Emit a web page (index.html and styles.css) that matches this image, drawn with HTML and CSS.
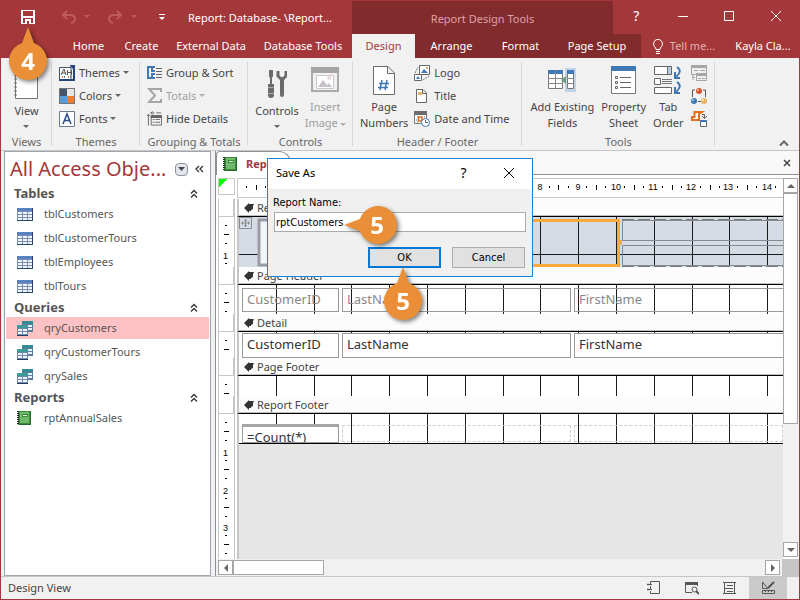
FILE: index.html
```html
<!DOCTYPE html>
<html lang="en">

<head>
    <meta charset="UTF-8">
    <meta name="viewport" content="width=device-width, initial-scale=1.0">
    <title>Report Design Tools</title>
    <link rel="stylesheet" href="styles.css">
</head>

<body>

    <!-- shared drawings -->
    <svg class="defs" aria-hidden="true">
        <symbol id="grid" viewBox="0 0 544 52">
            <path d="M37.5 0V52M75.5 0V52M112.5 0V52M150.5 0V52M188.5 0V52M226.5 0V52M264.5 0V52M301.5 0V52M339.5 0V52M377.5 0V52M415.5 0V52M453.5 0V52M490.5 0V52M528.5 0V52" stroke="#1c1c1c" />
        </symbol>
        <symbol id="ticks" viewBox="0 0 14 146">
            <path d="M6 8.500h2M5 17.500h5M6 26.500h2M6 46.500h2M5 55.500h5M6 64.500h2M6 84.500h2M5 93.500h5M6 102.500h2M6 121.500h2M5 130.500h5M6 139.500h2" stroke="#000" />
        </symbol>
        <symbol id="arrow" viewBox="0 0 10 10">
            <path d="M0 5L5 0V1H10L9 3V6L7 7V8H5V10Z" fill="#333" />
        </symbol>
        <symbol id="table" viewBox="0 0 16 13">
            <path d="M0 0H16V13H0Z" fill="#7c8fb0" />
            <path d="M0 0H16V3H0Z" fill="#5b82c0" />
            <path d="M1 4H5V6H1ZM6 4H10V6H6ZM11 4H15V6H11ZM1 7H5V9H1ZM6 7H10V9H6ZM11 7H15V9H11ZM1 10H5V12H1ZM6 10H10V12H6ZM11 10H15V12H11Z" fill="#eef4fb" />
            <path d="M0 12.500H15.500V0" stroke="#2b426c" fill="none" />
        </symbol>
        <symbol id="query" viewBox="0 0 16 15">
            <path d="M5 0H16V11H5Z" fill="#5b7ba0" />
            <path d="M5 0H16V3H5Z" fill="#2f8a91" />
            <path d="M6 4H10V10H6ZM11 4H15V6H11ZM11 7H15V9H11Z" fill="#edf3fa" />
            <path d="M0 4H11V15H0Z" fill="#6d88b0" />
            <path d="M0 4H11V7H0Z" fill="#3d9b9b" />
            <path d="M1 8H5V10H1ZM6 8H10V10H6ZM1 11H5V13H1ZM6 11H10V13H6Z" fill="#f2f7fc" />
            <path d="M0 14.500H11" stroke="#253d67" />
        </symbol>
        <symbol id="book" viewBox="0 0 14 14">
            <path d="M1 0H14V14H1Z" fill="#3c8a3e" />
            <path d="M3 1H12V12H3Z" fill="#6fb86c" />
            <path d="M5 3H11V6H5Z" fill="#3c8a3e" />
            <path d="M6 4H10V5H6Z" fill="#d9efd2" />
            <path d="M1 0V14" stroke="#222" stroke-width="2" stroke-dasharray="1 1" />
            <path d="M13.500 0V13.500H3" stroke="#286b2e" fill="none" />
        </symbol>
        <symbol id="chev" viewBox="0 0 8 8">
            <path d="M1 4L4 1L7 4M1 8L4 5L7 8" stroke="#333" stroke-width="1.300" fill="none" />
        </symbol>
    </svg>

    <div class="window">
        <header class="titlebar">
            <div class="quick">
                <button class="bare" aria-label="Save"><svg width="14" height="14" viewBox="0 0 14 14"><path d="M0 0H14V14H0Z" fill="#fff" /><path d="M2 1H12V6H2ZM2 8H12V13H2Z" fill="#a4373a" /><path d="M4 9H10V13H4Z" fill="#fff" /><path d="M6 11H8V14H6Z" fill="#a4373a" /></svg></button>
                <button class="bare undo" aria-label="Undo"><svg width="29" height="14" viewBox="0 0 29 14"><path d="M6 1L2 5L6 9M2 5H9Q14 5 14 9Q14 12 10 13" stroke="#c05b5d" stroke-width="2" fill="none" /><path d="M23 5H29L26 8Z" fill="#c05b5d" /></svg></button>
                <button class="bare redo" aria-label="Redo"><svg width="29" height="14" viewBox="0 0 29 14"><path d="M9 1L13 5L9 9M13 5H6Q1 5 1 9Q1 12 5 13" stroke="#c05b5d" stroke-width="2" fill="none" /><path d="M23 5H29L26 8Z" fill="#c05b5d" /></svg></button>
                <button class="bare more" aria-label="Customize toolbar"><svg width="6" height="6" viewBox="0 0 6 6"><path d="M0 .5H6" stroke="#fff" /><path d="M0 3H6L3 6Z" fill="#fff" /></svg></button>
            </div>
            <div class="file-name">Report: Database- \Report...</div>
            <div class="context-title">Report Design Tools</div>
            <div class="window-buttons">
                <button class="bare" aria-label="Help">?</button>
                <button class="bare" aria-label="Minimize"><svg width="10" height="10"><path d="M0 5.500H10" stroke="#fff" /></svg></button>
                <button class="bare" aria-label="Maximize"><svg width="10" height="10"><path d="M.5 .5H9.500V9.500H.5Z" stroke="#fff" fill="none" /></svg></button>
                <button class="bare" aria-label="Close"><svg width="10" height="10"><path d="M0 0L10 10M10 0L0 10" stroke="#fff" /></svg></button>
            </div>
        </header>

        <nav class="tabs">
            <span></span>
            <button>Home</button>
            <button>Create</button>
            <button>External Data</button>
            <button>Database Tools</button>
            <button class="active">Design</button>
            <button class="context">Arrange</button>
            <button class="context">Format</button>
            <button class="context">Page Setup</button>
            <button class="tell"><svg width="10" height="15" viewBox="0 0 10 15"><path d="M3 10.500Q3 9 1.500 7.500Q.5 6 .5 5Q1 .5 5 .5T9.500 5Q9.500 6 8.500 7.500Q7 9 7 10.500ZM3 12.500H7M3 14.500H7" stroke="#fff" fill="none" /></svg>Tell me...</button>
            <button>Kayla Cla...</button>
        </nav>

        <section class="ribbon">
            <div class="group views">
                <div class="tools">
                    <button class="big"><span class="icon"><svg width="24" height="30" viewBox="0 0 24 30"><path d="M1.500 1.500H23.500V29.500H1.500Z" fill="#fff" stroke="#777" /><path d="M0 6h3M0 10h3M0 14h3M0 18h3M0 22h3M0 26h3" stroke="#777" /></svg></span>View<span class="drop"></span></button>
                </div>
                <h2>Views</h2>
            </div>
            <div class="group themes">
                <div class="tools column">
                    <button class="small"><svg width="16" height="16" viewBox="0 0 16 16"><path d="M.5 2.500H12V15.500H.5Z" fill="#fff" stroke="#44546a" /><path d="M11 0H16V16H0V14H14V4L11 1Z" fill="#26437c" /><path d="M2 10L5 4L7 10M3 8H7M8.500 5V10M12.500 5V10M8 7.500H12" stroke="#555" fill="none" /><path d="M3 12h1M9 12h1" stroke="#ed7d31" stroke-width="2" /><path d="M5 12h1M11 12h1" stroke="#4a7ebb" stroke-width="2" /></svg>Themes<i class="drop"></i></button>
                    <button class="small"><svg width="16" height="16" viewBox="0 0 16 16"><path d="M0 0H16V16H0Z" fill="#767676" /><path d="M1 1H8V8H1Z" fill="#44546a" /><path d="M8 1H15V8H8Z" fill="#e7e6e6" /><path d="M1 8H8V15H1Z" fill="#5b9bd5" /><path d="M8 8H15V15H8Z" fill="#ed7d31" /></svg>Colors<i class="drop"></i></button>
                    <button class="small"><svg width="16" height="16" viewBox="0 0 16 16"><path d="M.5 .5H15.500V15.500H.5Z" fill="#fff" stroke="#6b7a90" /><path d="M4 13L8 3L12 13M5.500 9.500H10.500" stroke="#234b84" stroke-width="1.500" fill="none" /></svg>Fonts<i class="drop"></i></button>
                </div>
                <h2>Themes</h2>
            </div>
            <div class="group grouping">
                <div class="tools column">
                    <button class="small"><svg width="15" height="14" viewBox="0 0 15 14"><path d="M4 1H1V12H4M8 1H5V5H8M8 8H5V12H8" stroke="#3f7ab5" stroke-width="2" fill="none" /><path d="M9 2.500H15M9 5.500H15M9 8.500H15M9 11.500H15" stroke="#666" /></svg>Group &amp; Sort</button>
                    <button class="small off"><svg width="15" height="15" viewBox="0 0 15 15"><path d="M14 4V1H2L8 7.500L2 14H14V11" stroke="#a6a6a6" stroke-width="2" fill="none" /></svg>Totals<i class="drop"></i></button>
                    <button class="small"><svg width="15" height="15" viewBox="0 0 16 15"><path d="M4 1.500H8M10 1.500H15M6 0L4 1.500L6 3M1.500 3V15M0 5L1.500 3L3 5M4.500 4.500H15.500V14.500H4.500ZM6 8.500H8M9 8.500H14M6 11.500H8M9 11.500H14" stroke="#666" fill="none" /><path d="M4 4H16V7H4Z" fill="#666" /></svg>Hide Details</button>
                </div>
                <h2>Grouping &amp; Totals</h2>
            </div>
            <div class="group controls">
                <div class="tools">
                    <button class="big"><span class="icon"><svg width="20" height="28" viewBox="0 0 20 28"><path d="M2 0H6V6L5 8V14H7V25Q7 28 4 28T1 25V14H3V8L2 6Z" fill="#6b6b6b" /><path d="M11 1V6L14 9H16L19 6V1" stroke="#6b6b6b" stroke-width="3" fill="none" /><path d="M15 9V25" stroke="#6b6b6b" stroke-width="4" stroke-linecap="round" /><path d="M1 17.500H7M1 23.500H7" stroke="#aaa" /></svg></span>Controls<span class="drop"></span></button>
                    <button class="big off"><span class="icon"><svg width="28" height="26" viewBox="0 0 28 26"><path d="M1 1H27V24H1Z" fill="#f3f0f4" stroke="#aaa" stroke-width="2" /><path d="M0 0H28V6H0Z" fill="#a5a5a5" /><path d="M5.500 8.500H22.500V21.500H5.500Z" fill="#fff" stroke="#ccc6cf" /><path d="M7 20L12 13L16 18L18 16L21 20Z" fill="#c6c1ca" /><circle cx="18" cy="11" r="2" fill="#e8d9d9" /></svg></span>Insert<br>Image<i class="drop"></i></button>
                </div>
                <h2>Controls</h2>
            </div>
            <div class="group header-footer">
                <div class="tools">
                    <button class="big"><span class="icon"><svg width="22" height="29" viewBox="0 0 22 29"><path d="M.5 .5H15L21.500 7V28.500H.5ZM14.500 .5V7.500H21.500" fill="#fff" stroke="#6b6b6b" /><path d="M9 14L7 24M14 14L12 24M6 17.500H16M5 21.500H15" stroke="#3f78b5" stroke-width="1.500" /></svg></span>Page<br>Numbers</button>
                    <div class="column">
                        <button class="small"><svg width="16" height="16" viewBox="0 0 16 16"><path d="M5.500 .5H15.500V9.500H5.500Z" fill="#fff" stroke="#666" /><path d="M7 8L10 4L12 6L14 8Z" fill="#3f78b5" /><path d="M12 2h2v2h-2z" fill="#e9a56b" /><path d="M.5 9.500H7.500V15.500H.5Z" fill="#fff" stroke="#666" /><path d="M2 14L4 11L6 14Z" fill="#3f78b5" /><path d="M1 8L4 2M9 15L15 11" stroke="#777" stroke-dasharray="2 1" /></svg>Logo</button>
                        <button class="small"><svg width="16" height="14" viewBox="0 0 16 14"><path d="M2.500 .5H9L12.500 4V13.500H2.500ZM8.500 .5V4.500H12.500" fill="#fff" stroke="#666" /><path d="M4 3H8V6H4Z" fill="#e4b564" /></svg>Title</button>
                        <button class="small"><svg width="16" height="16" viewBox="0 0 16 16"><path d="M.5 .5H12.500V12.500H.5Z" fill="#fff" stroke="#777" /><path d="M0 0H13V4H0Z" fill="#6b6b6b" /><path d="M3 6h1M10 6h1M2 9h1M3 11h1" stroke="#777" /><path d="M4.500 6H8V10H4.500Z" stroke="#dd6b1c" fill="none" stroke-width="1.500" /><circle cx="11.500" cy="11.500" r="4" fill="#fff" stroke="#3f78b5" /><path d="M11.500 9V11.500H14" stroke="#666" fill="none" /></svg>Date and Time</button>
                    </div>
                </div>
                <h2>Header / Footer</h2>
            </div>
            <div class="group design-tools">
                <div class="tools">
                    <button class="big"><span class="icon"><svg width="28" height="24" viewBox="0 0 28 24"><path d="M17 0H28V24H17Z" fill="#bfd2ea" /><path d="M.5 2.500H14.500V20.500H.5ZM19.500 2.500H25.500V20.500H19.500Z" fill="#fff" stroke="#777" /><path d="M0 2H15V6H0ZM19 2H26V6H19Z" fill="#3f78b5" /><path d="M7.500 2V20M0 10.500H15M0 15.500H15M19 10.500H26M19 15.500H26" stroke="#888" /><path d="M18 8V16L13 12Z" fill="#6b9c86" /></svg></span>Add Existing<br>Fields</button>
                    <button class="big"><span class="icon"><svg width="25" height="28" viewBox="0 0 25 28"><path d="M.5 .5H24.500V27.500H.5Z" fill="#fff" stroke="#777" /><path d="M0 0H25V5H0Z" fill="#3f78b5" /><path d="M9 11.500H20M9 16.500H20M9 21.500H20" stroke="#666" /><path d="M4.500 10.500h2v2h-2zM4.500 15.500h2v2h-2zM4.500 20.500h2v2h-2z" stroke="#666" fill="none" /></svg></span>Property<br>Sheet</button>
                    <button class="big"><span class="icon"><svg width="28" height="28" viewBox="0 0 28 28"><path d="M.5 .5H17.500V8.500H.5ZM.5 12.500H6.500V18.500H.5ZM.5 21.500H17.500V27.500H.5Z" fill="#fff" stroke="#666" /><path d="M13.500 1H17V8H13.500Z" fill="#b8cde8" /><path d="M13.500 1V8" stroke="#666" /><path d="M8 13.500H18M8 15.500H18M8 17.500H18" stroke="#777" /><path d="M23 1Q29 5 22 11M21 6V12H26M23 16Q29 20 22 26M21 21V27H26" stroke="#3f78b5" stroke-width="2" fill="none" /></svg></span>Tab<br>Order</button>
                    <div class="column">
                        <button class="small" aria-label="Subform in new window"><svg width="16" height="16" viewBox="0 0 16 16"><path d="M.5 .5H15.500V9.500H.5ZM5.500 8.500H15.500V15.500H5.500Z" fill="#eee" stroke="#a6a6a6" /><path d="M0 0H16V3H0ZM5 8H16V11H5Z" fill="#a6a6a6" /><path d="M3 5.500H7M9 5.500H14M7 13.500H10M11 13.500H14M1 12.500H4M2 10V15" stroke="#a6a6a6" /></svg></button>
                        <button class="small" aria-label="View code"><svg width="16" height="16" viewBox="0 0 16 16"><path d="M4 2H1.500V9M12 2H14.500V9M7 13.500H10" stroke="#555" fill="none" /><circle cx="8" cy="3" r="3" fill="#d4532b" /><circle cx="3" cy="13" r="3" fill="#3f78b5" /><circle cx="13" cy="13" r="3" fill="#e4b564" /><path d="M6 2h2M1 12h2M11 12h2" stroke="#fff" /></svg></button>
                        <button class="small" aria-label="Convert macros"><svg width="16" height="16" viewBox="0 0 16 16"><path d="M3.500 1H11L8 3V9H1V6H3.500Z" fill="#fff" stroke="#e0701b" stroke-width="2" /><path d="M11 3.500H13.500V7M11 5L13.500 7.500L16 5" stroke="#666" fill="none" /><path d="M9.500 9.500H15.500V15.500H9.500Z" fill="#fff" stroke="#666" /><path d="M9 9H16V11H9Z" fill="#3f78b5" /></svg></button>
                    </div>
                </div>
                <h2>Tools</h2>
            </div>
            <button class="bare collapse" aria-label="Collapse ribbon"><svg width="10" height="6"><path d="M1 5.500L5 1.500L9 5.500" stroke="#666" stroke-width="2" fill="none" /></svg></button>
        </section>

        <main>
            <aside class="objects">
                <div class="objects-title">
                    <h1>All Access Obje...</h1>
                    <button class="bare round" aria-label="Filter"><svg width="7" height="5"><path d="M0 0H7L3.500 4Z" fill="#445" /></svg></button>
                    <button class="bare" aria-label="Close pane"><svg width="9" height="8"><path d="M4 1L1 4L4 7M8 1L5 4L8 7" stroke="#333" stroke-width="1.300" fill="none" /></svg></button>
                </div>
                <h3>Tables <svg><use href="#chev" /></svg></h3>
                <ul>
                    <li><svg><use href="#table" /></svg>tblCustomers</li>
                    <li><svg><use href="#table" /></svg>tblCustomerTours</li>
                    <li><svg><use href="#table" /></svg>tblEmployees</li>
                    <li><svg><use href="#table" /></svg>tblTours</li>
                </ul>
                <h3>Queries <svg><use href="#chev" /></svg></h3>
                <ul>
                    <li class="selected"><svg><use href="#query" /></svg>qryCustomers</li>
                    <li><svg><use href="#query" /></svg>qryCustomerTours</li>
                    <li><svg><use href="#query" /></svg>qrySales</li>
                </ul>
                <h3>Reports <svg><use href="#chev" /></svg></h3>
                <ul>
                    <li><svg viewBox="0 0 16 15"><use href="#book" width="14" height="14" /></svg>rptAnnualSales</li>
                </ul>
            </aside>
            <div class="splitter"></div>
            <div class="document">
                <div class="doc-tabs">
                    <div class="doc-tab"><svg width="14" height="14"><use href="#book" /></svg>Report1</div>
                    <button class="bare" aria-label="Close document"><svg width="8" height="8"><path d="M1 1L7 7M7 1L1 7" stroke="#444" stroke-width="1.500" /></svg></button>
                </div>
                <div class="doc-body">
                    <div class="design">
                        <div class="ruler-row">
                            <div class="corner"></div>
                            <div class="ruler"><svg width="546" height="18">
                                    <path d="M8 8h1M27 8h1M311 8h1M330 8h1M348 8h1M367 8h1M386 8h1M405 8h1M424 8h1M443 8h1M462 8h1M481 8h1M499 8h1M518 8h1M537 8h1" stroke="#000" stroke-width="2" />
                                    <path d="M18.500 6v5M320.500 6v5M358.500 6v5M396.500 6v5M434.500 6v5M472.500 6v5M509.500 6v5" stroke="#000" />
                                    <text x="302" y="11">8</text>
                                    <text x="340" y="11">9</text>
                                    <text x="378" y="11">10</text>
                                    <text x="415" y="11">11</text>
                                    <text x="453" y="11">12</text>
                                    <text x="490" y="11">13</text>
                                    <text x="529" y="11">14</text>
                                </svg></div>
                        </div>
                        <div class="band"><div class="notch"></div><h4><svg><use href="#arrow" /></svg>Report Header</h4></div>
                        <div class="area report-head">
                            <svg class="ticks"><use href="#ticks" width="14" height="146" /><text x="4" y="42">1</text></svg>
                            <div class="canvas">
                                <svg class="grid"><use href="#grid" width="544" height="52" /></svg>
                                <svg class="objects-layer">
                                    <path d="M0 37.500H544" stroke="#1c1c1c" />
                                    <path d="M.5 .5H12.500V11.500H.5Z" fill="#d6dce5" stroke="#8a8d92" />
                                    <path d="M6.500 2V10M2 6H11M5 3.500H8M5 8.500H8M3.500 4.500V7.500M9.500 4.500V7.500" stroke="#8a8d92" />
                                    <path d="M20 3H60V48H20Z" fill="#f4f5f7" stroke="#999da3" stroke-width="3" />
                                    <path d="M250 3.500H379.500V48.500H250" stroke="#ffa93a" stroke-width="3" fill="none" />
                                    <path d="M380 23h3v5h-3z" fill="#ffa93a" />
                                    <path d="M544 3.500H383.500V23.500H544M544 28.500H383.500V48.500H544" stroke="#86898e" fill="none" />
                                    <path d="M383 2.500H544M383 49.500H544" stroke="#77797d" stroke-dasharray="12 4" />
                                </svg>
                            </div>
                        </div>
                        <div class="band"><div class="notch"></div><h4><svg><use href="#arrow" /></svg>Page Header</h4></div>
                        <div class="area page-head">
                            <svg class="ticks"><use href="#ticks" width="14" height="146" /></svg>
                            <div class="canvas">
                                <svg class="grid"><use href="#grid" width="544" height="52" /></svg>
                                <div class="fields"><span>CustomerID</span><span>LastName</span><span>FirstName</span></div>
                            </div>
                        </div>
                        <div class="band"><div class="notch"></div><h4><svg><use href="#arrow" /></svg>Detail</h4></div>
                        <div class="area detail">
                            <svg class="ticks"><use href="#ticks" width="14" height="146" /></svg>
                            <div class="canvas">
                                <svg class="grid"><use href="#grid" width="544" height="52" /></svg>
                                <div class="fields"><span>CustomerID</span><span>LastName</span><span>FirstName</span></div>
                            </div>
                        </div>
                        <div class="band"><div class="notch"></div><h4><svg><use href="#arrow" /></svg>Page Footer</h4></div>
                        <div class="area page-foot">
                            <svg class="ticks"><use href="#ticks" width="14" height="146" /></svg>
                            <div class="canvas">
                                <svg class="grid"><use href="#grid" width="544" height="52" /></svg>
                            </div>
                        </div>
                        <div class="band"><div class="notch"></div><h4><svg><use href="#arrow" /></svg>Report Footer</h4></div>
                        <div class="area report-foot">
                            <svg class="ticks"><use href="#ticks" width="14" height="146" /><text x="4" y="42">1</text><text x="4" y="80">2</text><text x="4" y="117">3</text></svg>
                            <div class="canvas">
                                <div class="foot-page">
                                    <svg class="grid"><use href="#grid" width="544" height="52" /></svg>
                                    <div class="fields"><span class="count">=Count(*)</span><span class="dotted"></span><span class="dotted"></span></div>
                                </div>
                            </div>
                        </div>
                    </div>
                    <div class="scroll-y">
                        <button aria-label="Scroll up"><svg width="8" height="4"><path d="M0 4L4 0L8 4Z" fill="#666" /></svg></button>
                        <div class="thumb"></div>
                        <button aria-label="Scroll down"><svg width="8" height="4"><path d="M0 0H8L4 4Z" fill="#666" /></svg></button>
                    </div>
                </div>
                <div class="scroll-x">
                    <button aria-label="Scroll left"><svg width="4" height="8"><path d="M4 0V8L0 4Z" fill="#666" /></svg></button>
                    <div class="thumb"></div>
                    <button aria-label="Scroll right"><svg width="4" height="8"><path d="M0 0V8L4 4Z" fill="#666" /></svg></button>
                    <div class="grip"></div>
                </div>
            </div>
        </main>

        <footer class="status">
            <span>Design View</span>
            <button class="bare" aria-label="Report view"><svg width="14" height="14"><path d="M3.500 3V.5H12.500V12.500H3.500V10M3.500 5V8M0 3.500H5M0 8.500H5M1 2.500V4.500M1 7.500V9.500" stroke="#555" fill="none" /></svg></button>
            <button class="bare" aria-label="Print preview"><svg width="14" height="14"><path d="M.5 1V11.500H7M12.500 1V5" stroke="#555" fill="none" /><path d="M0 1H13V4H0Z" fill="#555" /><circle cx="9.500" cy="8.500" r="2.500" stroke="#555" fill="none" /><path d="M11 10L14 13" stroke="#555" stroke-width="2" /></svg></button>
            <button class="bare" aria-label="Layout view"><svg width="14" height="14"><path d="M1.500 1V13M11.500 1V13M0 1.500H13M0 12.500H13M4 4.500H10M2 7.500H10M4 10.500H10" stroke="#555" /></svg></button>
            <button class="bare current" aria-label="Design view"><svg width="15" height="14"><path d="M1.500 1V7.500H7ZM1.500 9.500H13.500V12.500H1.500Z" stroke="#555" fill="none" /><path d="M4.500 9V11M7.500 9V11M10.500 9V11" stroke="#555" /><path d="M7 7L13 1" stroke="#555" stroke-width="2" /></svg></button>
        </footer>
    </div>

    <form class="dialog" role="dialog" aria-label="Save As">
        <div class="dialog-title">
            <span>Save As</span>
            <button type="button" class="bare" aria-label="Help">?</button>
            <button type="button" class="bare" aria-label="Close"><svg width="10" height="10"><path d="M0 0L10 10M10 0L0 10" stroke="#000" /></svg></button>
        </div>
        <label for="reportName">Report Name:</label>
        <input type="text" id="reportName" value="rptCustomers">
        <div class="dialog-buttons">
            <button type="button" class="ok">OK</button>
            <button type="button">Cancel</button>
        </div>
    </form>

    <!-- step markers -->
    <div class="step step-save"><svg width="40" height="54" viewBox="0 0 40 54"><path d="M20 0L26 16A19 19 0 1 1 14 16Z" fill="#ea8f38" /></svg><b>4</b></div>
    <div class="step step-name"><svg width="53" height="40" viewBox="0 0 53 40"><path d="M0 20L16 14A19 19 0 1 1 16 26Z" fill="#ea8f38" /></svg><b>5</b></div>
    <div class="step step-ok"><svg width="40" height="54" viewBox="0 0 40 54"><path d="M20 0L26 16A19 19 0 1 1 14 16Z" fill="#ea8f38" /></svg><b>5</b></div>

</body>

</html>
```

FILE: styles.css
```css
* {
    box-sizing: border-box;
}

body {
    margin: 0;
    font-family: "Noto Sans", "Open Sans", sans-serif;
    font-size: 11px;
    line-height: 16px;
    color: #444;
}

h1, h2, h3, h4, ul {
    margin: 0;
    padding: 0;
    font-weight: normal;
    list-style: none;
}

svg {
    display: block;
    flex: none;
}

button {
    font: inherit;
    color: inherit;
    border: none;
    background: none;
    padding: 0;
    margin: 0;
    white-space: nowrap;
}

.defs {
    position: absolute;
    width: 0;
    height: 0;
}

.bare {
    display: flex;
    align-items: center;
    justify-content: center;
}

.window {
    display: flex;
    flex-direction: column;
    height: 100vh;
    border: 1px solid #a4373a;
    background: #f1f1f1;
    overflow: hidden;
}

/* title bar */
.titlebar {
    display: flex;
    height: 33px;
    flex: none;
    background: #a4373a;
    color: #fff;
}

.quick {
    display: flex;
    width: 187px;
    padding: 0 23px 2px 20px;
    justify-content: space-between;
    align-items: center;
}

.undo {
    margin-left: 8px;
}

.more {
    margin-left: 4px;
}

.file-name {
    width: 164px;
    line-height: 34px;
    white-space: nowrap;
}

.context-title {
    width: 261px;
    background: #822b2d;
    color: #dfa2a4;
    text-align: center;
    line-height: 36px;
}

.window-buttons {
    display: flex;
    flex: 1;
    height: 30px;
}

.window-buttons button {
    flex: 1;
    font-size: 14px;
}

.tabs {
    display: grid;
    grid-template-columns: 61px 53px 53px 86px 98px 63px 73px 65px 88px 86px 1fr;
    height: 24px;
    flex: none;
    background: #a4373a;
    color: #fff;
}

.tabs .active {
    background: #f1f1f1;
    color: #a4373a;
}

.tabs .context {
    background: #822b2d;
}

.tabs .tell {
    display: flex;
    align-items: center;
    justify-content: center;
    gap: 7px;
    color: #e0b0b2;
}

/* ribbon */
.ribbon {
    display: flex;
    flex: none;
    height: 93px;
    border-bottom: 1px solid #c6c6c6;
}

.group {
    position: relative;
    display: flex;
    flex-direction: column;
    padding-top: 3px;
}

.group::after {
    content: "";
    position: absolute;
    right: 0;
    top: 4px;
    bottom: 4px;
    border-right: 1px solid #d8d8d8;
}

.group h2 {
    padding-top: 4px;
    font-size: 11px;
    text-align: center;
    color: #666;
    white-space: nowrap;
}

.tools {
    display: flex;
    justify-content: center;
    height: 69px;
}

.column {
    display: flex;
    flex-direction: column;
    justify-content: flex-start;
}

.small {
    display: flex;
    align-items: center;
    gap: 4px;
    height: 23px;
}

.big {
    display: block;
    text-align: center;
    height: 70px;
}

.big .icon {
    display: flex;
    height: 38px;
    align-items: center;
    justify-content: center;
}

.drop {
    display: inline-block;
    border: 3px solid transparent;
    border-top-color: #666;
    border-bottom: none;
    vertical-align: middle;
    margin-left: 2px;
}

.big span.drop {
    display: block;
    width: 6px;
    margin: 6px auto 0;
}

.small .drop {
    margin-left: -1px;
}

.off {
    color: #a0a0a0;
}

.off .drop {
    border-top-color: #b0b0b0;
}

.views {
    width: 51px;
}

.themes {
    width: 88px;
}

.themes .tools,
.grouping .tools {
    padding-left: 7px;
}

.grouping {
    width: 108px;
}

.controls {
    width: 105px;
}

.controls .tools {
    gap: 6px;
}

.header-footer {
    width: 169px;
}

.header-footer .tools {
    justify-content: flex-start;
    gap: 6px;
    padding-left: 7px;
}

.design-tools {
    width: 193px;
}

.design-tools .tools {
    gap: 7px;
}

.collapse {
    margin: auto 10px 4px auto;
}

/* navigation pane */
main {
    display: flex;
    flex: 1;
    min-height: 0;
    padding-left: 3px;
}

.objects {
    width: 207px;
    flex: none;
    background: #fff;
    border: 1px solid #a0a5ae;
    padding: 0 1px;
}

.objects-title {
    display: flex;
    align-items: center;
    height: 32px;
    padding: 2px 5px 0 4px;
    color: #a4373a;
}

.objects-title h1 {
    font-size: 20px;
    line-height: 28px;
    flex: 1;
    white-space: nowrap;
}

.round {
    width: 13px;
    height: 13px;
    margin-right: 7px;
    border: 1px solid #8e939c;
    border-radius: 4px;
    background: #e2e5ea;
}

.objects h3 {
    display: flex;
    align-items: center;
    justify-content: space-between;
    height: 18px;
    padding: 0 11px 0 8px;
    font-size: 13px;
    font-weight: bold;
    color: #555;
}

.objects h3 svg {
    width: 8px;
    height: 9px;
}

.objects li {
    display: flex;
    align-items: center;
    gap: 11px;
    height: 24px;
    padding-left: 11px;
    color: #555;
}

.objects li svg {
    width: 16px;
    height: 15px;
}

.objects .selected {
    background: linear-gradient(#ffc2c4, #ffc2c4) 0 1px / 100% 22px no-repeat;
}

.splitter {
    width: 5px;
    flex: none;
    border-right: 1px solid #8e8f98;
}

/* document */
.document {
    flex: 1;
    min-width: 0;
    display: flex;
    flex-direction: column;
    background: #fff;
}

.doc-tabs {
    display: flex;
    justify-content: space-between;
    height: 24px;
    flex: none;
    padding-right: 8px;
    background: #f8f8f8;
    border-bottom: 1px solid #8e8f98;
}

.doc-tab {
    display: flex;
    align-items: center;
    gap: 9px;
    width: 75px;
    height: 24px;
    padding-left: 6px;
    overflow: hidden;
    background: #fff;
    border: 1px solid #8e8f98;
    border-bottom: none;
    border-radius: 4px 12px 0 0;
    color: #a4373a;
    font-weight: bold;
}

.doc-body {
    display: flex;
    flex: 1;
    min-height: 0;
    padding: 3px 0 0 2px;
}

.design {
    flex: 1;
    min-width: 0;
    display: flex;
    flex-direction: column;
    overflow: hidden;
}

.ruler-row {
    display: flex;
    gap: 2px;
    height: 21px;
    flex: none;
}

.corner {
    width: 17px;
    height: 17px;
    border: 1px solid #c6c6c6;
    background: linear-gradient(135deg, #0f0 6px, #fff 6px);
}

.ruler {
    flex: 1;
    height: 20px;
    overflow: hidden;
    border: 1px solid #c6c6c6;
    border-right: none;
}

text {
    font-family: "Liberation Sans", sans-serif;
    font-size: 9px;
    fill: #000;
}

.ruler text {
    text-anchor: middle;
}

.band {
    display: flex;
    height: 18px;
    flex: none;
}

.notch {
    width: 17px;
    border: 1px solid #c6c6c6;
    border-width: 0 1px;
}

.notch::before {
    content: "";
    display: block;
    width: 14px;
    height: 17px;
    border: 1px solid #c6c6c6;
    border-width: 0 1px 1px 0;
}

.band h4 {
    flex: 1;
    display: flex;
    align-items: center;
    gap: 3px;
    margin-left: 2px;
    padding-left: 5px;
    border-left: 2px solid #c6c6c6;
    border-bottom: 1px solid #000;
    background: #fcfcfc;
    box-shadow: inset 0 -1px #c0c0c0;
    font-size: 11px;
}

.band h4 svg {
    width: 10px;
    height: 10px;
}

.area {
    display: flex;
    flex: none;
}

.ticks {
    width: 17px;
    height: 100%;
    border: 1px solid #c6c6c6;
    border-width: 0 1px;
    overflow: hidden;
}

.canvas {
    position: relative;
    flex: 1;
    overflow: hidden;
    margin-left: 2px;
    border-left: 2px solid #c6c6c6;
}

.grid,
.objects-layer {
    position: absolute;
    left: 0;
    top: 0;
    width: 544px;
    height: 52px;
}

.report-head {
    height: 50px;
}

.report-head .canvas {
    background: #d6dce5;
}

.page-head {
    height: 29px;
}

.detail {
    height: 26px;
}

.page-foot {
    height: 20px;
}

.report-foot {
    flex: 1;
    min-height: 0;
}

.report-foot .canvas {
    background: #e6e6e6;
}

.foot-page {
    position: relative;
    height: 30px;
    padding-top: 10px;
    background: #fff;
    border-bottom: 1px solid #000;
    overflow: hidden;
}

.fields {
    position: relative;
    display: grid;
    grid-template-columns: 97px 229px 1fr;
    gap: 3px;
    margin-left: 3px;
    font-size: 13px;
}

.fields span {
    height: 24px;
    padding: 0 4px;
    border: 1px solid #999;
    line-height: 20px;
}

.fields span:last-child {
    border-right: none;
}

.page-head .fields {
    padding-top: 3px;
    color: #888;
}

.detail .fields {
    padding-top: 1px;
    color: #333;
}

.detail .fields span {
    height: 25px;
    background: #fff;
}

.report-foot .fields span {
    height: 19px;
}

.report-foot .count {
    border-top: 3px solid #a6a6a6;
    background: #fff;
    color: #333;
    overflow: hidden;
}

.report-foot .fields .dotted {
    height: 17px;
    margin-top: 1px;
    border: 1px dashed #d0d0d0;
}

/* scroll bars */
.scroll-y,
.scroll-x {
    display: flex;
    flex: none;
    background: #f1f1f1;
}

.scroll-y {
    flex-direction: column;
    width: 16px;
    margin-bottom: 2px;
}

.scroll-x {
    height: 17px;
    padding: 1px 0 1px 2px;
}

.scroll-y button,
.scroll-x button {
    display: flex;
    align-items: center;
    justify-content: center;
    width: 15px;
    height: 15px;
    flex: none;
    background: #fff;
    border: 1px solid #a6a6a6;
}

.scroll-y .thumb {
    height: 231px;
    width: 15px;
    margin-bottom: auto;
    background: #fff;
    border: 1px solid #a6a6a6;
}

.scroll-x .thumb {
    width: 91px;
    margin-right: auto;
    background: #fff;
    border: 1px solid #a6a6a6;
}

.grip {
    width: 17px;
    margin: -1px 0 -1px 2px;
    background: #c6c6c6;
}

/* status bar */
.status {
    display: flex;
    flex: none;
    height: 23px;
    padding-right: 12px;
    border-top: 1px solid #c6c6c6;
}

.status span {
    flex: 1;
    padding-left: 7px;
    line-height: 21px;
}

.status button {
    width: 38px;
}

.status .current {
    background: #cacaca;
}

/* save as dialog */
.dialog {
    position: absolute;
    left: 267px;
    top: 158px;
    width: 266px;
    height: 119px;
    border: 1px solid #1883d7;
    background: #f0f0f0;
    color: #000;
    font-family: "DejaVu Sans Condensed", "Noto Sans", sans-serif;
    font-size: 11px;
}

.dialog-title {
    display: flex;
    height: 30px;
    padding: 0 1px 2px 8px;
    background: #fff;
    font-family: "Noto Sans", sans-serif;
}

.dialog-title span {
    flex: 1;
    line-height: 28px;
}

.dialog-title button {
    width: 45px;
}

.dialog-title button:first-of-type {
    font-size: 14px;
}

.dialog label {
    display: block;
    padding: 6px 5px 1px;
}

.dialog input {
    display: block;
    width: 252px;
    height: 20px;
    margin-left: 6px;
    padding: 0 1px;
    border: 1px solid #ababab;
    background: #fff;
    color: #000;
    font: inherit;
}

.dialog-buttons {
    display: flex;
    justify-content: flex-end;
    gap: 11px;
    padding: 15px 7px 0 0;
}

.dialog-buttons button {
    width: 73px;
    height: 21px;
    border: 1px solid #adadad;
    background: #e1e1e1;
}

.dialog-buttons .ok {
    border: 2px solid #0078d7;
}

/* step markers */
.step {
    position: absolute;
    filter: drop-shadow(2px 2px 2px rgba(0, 0, 0, 0.5));
    color: #fff;
    font-size: 24px;
    line-height: 40px;
    text-align: center;
}

.step b {
    position: absolute;
    right: 0;
    bottom: 0;
    width: 40px;
}

.step-save {
    left: 8px;
    top: 27px;
}

.step-name {
    left: 344px;
    top: 205px;
}

.step-ok {
    left: 383px;
    top: 267px;
}
```
